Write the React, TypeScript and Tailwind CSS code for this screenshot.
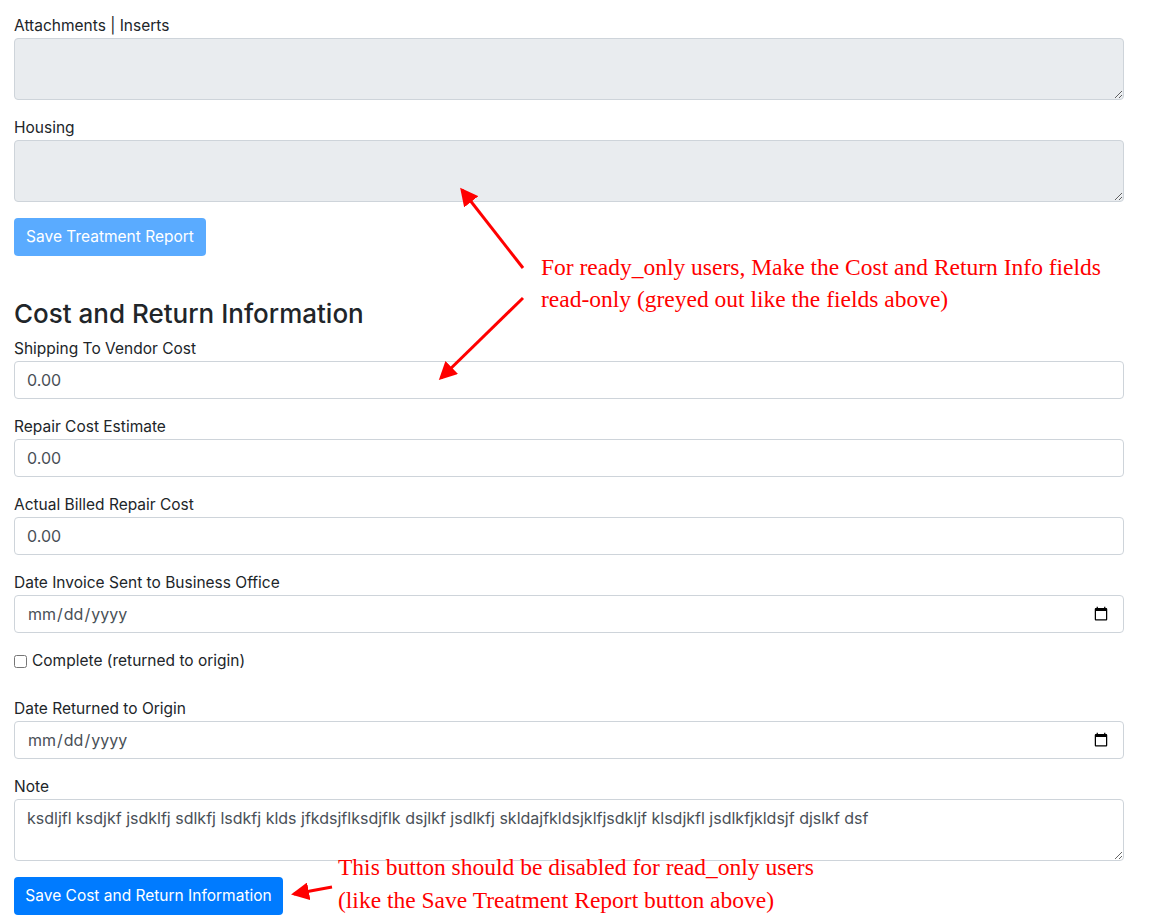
import React from "react";

const inputCls =
  "block w-full h-[38px] px-3 border border-[#ced4da] rounded-[4px] text-[16px] text-[#495057] bg-white outline-none";
const taCls =
  "block w-full h-[62px] px-3 py-[6px] border border-[#ced4da] rounded-[4px] text-[16px] text-[#495057] outline-none resize-y";

function Field({ label, children, mb = "mb-4" }: { label: string; children: React.ReactNode; mb?: string }) {
  return (
    <div className={mb}>
      <label className="block leading-[24px] text-[15.5px] text-[#212529]">{label}</label>
      {children}
    </div>
  );
}

export default function App() {
  return (
    <div className="relative w-[1162px] h-[923px] bg-white" style={{ fontFamily: 'Inter, "Liberation Sans", Arial, sans-serif' }}>
      <div className="w-[1110px] ml-[14px] pt-[14px]">
        <Field label="Attachments | Inserts">
          <textarea disabled className={taCls + " bg-[#e9ecef]"} />
        </Field>
        <Field label="Housing">
          <textarea disabled className={taCls + " bg-[#e9ecef]"} />
        </Field>
        <button disabled className="h-[38px] w-[192px] rounded-[4px] bg-[#5aabff] text-white text-[15.5px]">
          Save Treatment Report
        </button>
        <h3 className="mt-[42px] mb-[8px] text-[26px] leading-[31px] font-medium text-[#212529]">
          Cost and Return Information
        </h3>
        <Field label="Shipping To Vendor Cost">
          <input className={inputCls} defaultValue="0.00" />
        </Field>
        <Field label="Repair Cost Estimate">
          <input className={inputCls} defaultValue="0.00" />
        </Field>
        <Field label="Actual Billed Repair Cost">
          <input className={inputCls} defaultValue="0.00" />
        </Field>
        <Field label="Date Invoice Sent to Business Office">
          <input type="date" className={inputCls} />
        </Field>
        <div className="flex items-center gap-[5px] leading-[24px] text-[15.5px] text-[#212529] mb-[24px]">
          <input type="checkbox" className="w-[13px] h-[13px] m-0" />
          <span>Complete (returned to origin)</span>
        </div>
        <Field label="Date Returned to Origin">
          <input type="date" className={inputCls} />
        </Field>
        <Field label="Note">
          <textarea
            className={taCls + " bg-white text-[#495057] text-[15.5px]"}
            defaultValue="ksdljfl ksdjkf jsdklfj sdlkfj lsdkfj klds jfkdsjflksdjflk dsjlkf jsdlkfj skldajfkldsjklfjsdkljf klsdjkfl jsdlkfjkldsjf djslkf dsf"
          />
        </Field>
        <button className="h-[38px] w-[269px] rounded-[4px] bg-[#007bff] text-white text-[15.5px]">
          Save Cost and Return Information
        </button>
      </div>

      <svg className="absolute left-0 top-0 pointer-events-none" width="1162" height="923">
        <defs>
          <marker id="ah" markerWidth="6" markerHeight="6" refX="5" refY="3" orient="auto" markerUnits="strokeWidth">
            <path d="M0,0 L6,3 L0,6 z" fill="#ff0000" />
          </marker>
        </defs>
        <line x1="523" y1="268" x2="462" y2="190" stroke="#ff0000" strokeWidth="3" markerEnd="url(#ah)" />
        <line x1="523" y1="298" x2="441" y2="378" stroke="#ff0000" strokeWidth="3" markerEnd="url(#ah)" />
        <line x1="332" y1="887" x2="294" y2="894" stroke="#ff0000" strokeWidth="3" markerEnd="url(#ah)" />
      </svg>

      <div
        className="absolute left-[541px] top-[251px] text-[#ff0000] text-[23.5px] leading-[32px]"
        style={{ fontFamily: '"Liberation Serif", "Times New Roman", serif' }}
      >
        <div>For ready_only users, Make the Cost and Return Info fields</div>
        <div>read-only (greyed out like the fields above)</div>
      </div>
      <div
        className="absolute left-[338px] top-[851px] text-[#ff0000] text-[23.5px] leading-[33px]"
        style={{ fontFamily: '"Liberation Serif", "Times New Roman", serif' }}
      >
        <div>This button should be disabled for read_only users</div>
        <div>(like the Save Treatment Report button above)</div>
      </div>
    </div>
  );
}
